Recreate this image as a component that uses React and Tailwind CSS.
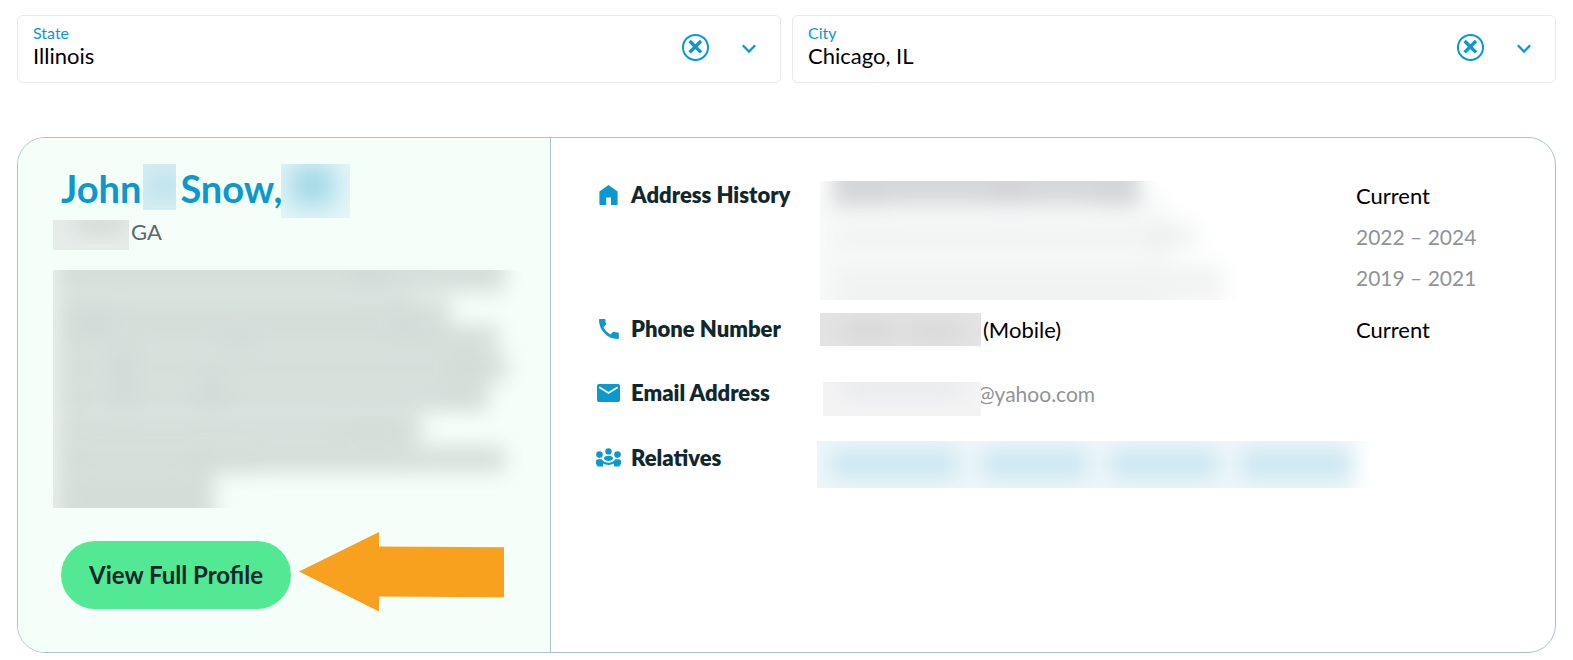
import { useState } from 'react';

const states = ['Illinois', 'Georgia', 'New York'];
const cities = ['Chicago, IL', 'Springfield, IL', 'Naperville, IL'];

// Each patch is [x, y, width, height, opacity]
const bioPatches = [
  [6, -30, 446, 52, 0.84],
  [6, 28, 392, 26, 0.8],
  [6, 55, 440, 26, 0.8],
  [6, 85, 449, 26, 0.8],
  [6, 115, 430, 26, 0.8],
  [6, 146, 364, 26, 0.8],
  [6, 176, 446, 26, 0.85],
  [6, 204, 156, 70, 0.86],
  [-30, -20, 50, 290, 0.35],
  [10, 14, 350, 180, 0.4],
  [360, 60, 70, 70, 0.4],
  [10, 180, 140, 80, 0.3],
  [300, -8, 34, 28, 0.6],
  [28, 36, 30, 30, 0.6],
  [56, 76, 28, 64, 0.5],
  [166, 60, 36, 22, 0.55],
  [142, 104, 34, 36, 0.5],
  [340, 36, 44, 40, 0.4],
  [395, 80, 44, 34, 0.4],
  [370, 120, 56, 18, 0.5],
  [290, 152, 56, 20, 0.4],
  [140, 180, 66, 24, 0.4],
];

const addressPatches = [
  [12, -30, 308, 54, 0.85],
  [16, -4, 50, 30, 0.45],
  [170, -4, 36, 28, 0.6],
  [275, -4, 44, 30, 0.5],
  [-20, 14, 370, 150, 0.14],
  [14, 44, 364, 24, 0.2],
  [14, 84, 388, 50, 0.18],
  [330, 40, 46, 30, 0.14],
  [350, 84, 56, 28, 0.14],
];

const relativePatches = [
  [-20, -30, 560, 110, 0.36],
  [14, 8, 126, 30, 0.9],
  [166, 8, 104, 30, 0.9],
  [294, 8, 106, 30, 0.9],
  [424, 8, 110, 30, 0.9],
];

function Redacted({ id, width, height, color, base = 'none', blur = 10, patches, className = '' }) {
  return (
    <svg
      className={`shrink-0 overflow-hidden ${className}`}
      width={width}
      height={height}
      viewBox={`0 0 ${width} ${height}`}
      aria-hidden="true"
    >
      <filter id={id} x="-50%" y="-50%" width="200%" height="200%">
        <feGaussianBlur stdDeviation={blur} />
      </filter>
      <rect width={width} height={height} fill={base} />
      <g filter={`url(#${id})`} fill={color}>
        {patches.map(([x, y, w, h, opacity], i) => (
          <rect key={i} x={x} y={y} width={w} height={h} opacity={opacity} />
        ))}
      </g>
    </svg>
  );
}

function LocationField({ id, label, options }) {
  const [value, setValue] = useState(options[0]);

  return (
    <div className="relative flex-1 h-[68px] rounded-md border border-[#e8eaea] bg-white">
      <label htmlFor={id} className="absolute left-[15px] top-[7px] text-base leading-5 text-[#0b98cc]">
        {label}
      </label>
      <select
        id={id}
        value={value}
        onChange={(e) => setValue(e.target.value)}
        className="w-full h-full appearance-none rounded-md bg-transparent pl-[15px] pr-28 pt-3 text-[22px] text-black"
      >
        <option value=""></option>
        {options.map((option) => (
          <option key={option} value={option}>{option}</option>
        ))}
      </select>
      <button
        type="button"
        aria-label={`Clear ${label}`}
        onClick={() => setValue('')}
        className="absolute right-[70px] top-[17px] text-[#0b98cc]"
      >
        <svg width="28" height="28" viewBox="0 0 28 28" fill="none" stroke="currentColor">
          <circle cx="13.5" cy="14.4" r="12.5" strokeWidth="2" />
          <path d="M7.600 8l11.400 11.400M19 8L7.600 19.400" strokeWidth="3.400" />
        </svg>
      </button>
      <svg
        className="pointer-events-none absolute right-6 top-[28px] text-[#0b98cc]"
        width="14"
        height="10"
        viewBox="0 0 14 10"
        fill="none"
        stroke="currentColor"
        strokeWidth="2.3"
      >
        <path d="M0.8 1.2L7 7.6l6.2-6.4" />
      </svg>
    </div>
  );
}

function HomeIcon() {
  return (
    <svg width="26" height="26" viewBox="0 0 26 26" fill="currentColor">
      <path d="M13.5 3L22.6 9.6V22a1 1 0 0 1-1 1H16v-7.6h-4.8V23H5.4a1 1 0 0 1-1-1V9.6z" />
    </svg>
  );
}

function PhoneIcon() {
  return (
    <svg width="26" height="26" viewBox="0 0 26 26" fill="currentColor">
      <path d="M5 3h4.4c.6 0 1 .4 1 1 0 1.3.2 2.5.6 3.7.1.4 0 .9-.3 1.2L8.4 11.2c1.7 3.2 4 5.5 7.2 7.2l2.3-2.3c.3-.3.8-.4 1.2-.3 1.2.4 2.4.6 3.7.6.6 0 1 .4 1 1V21.9c0 .6-.4 1-1 1C12.5 23 4 14.5 4 4c0-.6.4-1 1-1z" />
    </svg>
  );
}

function MailIcon() {
  return (
    <svg width="26" height="26" viewBox="0 0 26 26">
      <rect x="2" y="4" width="23" height="18" rx="2" fill="currentColor" />
      <path d="M4.3 7.2L13.5 13l9.2-5.8" fill="none" stroke="white" strokeWidth="1.9" />
    </svg>
  );
}

function RelativesIcon() {
  return (
    <svg width="26" height="26" viewBox="0 0 26 26" fill="currentColor">
      <circle cx="13.5" cy="6.4" r="3.2" />
      <circle cx="4.5" cy="9.6" r="3.3" />
      <circle cx="22.5" cy="9.6" r="3.3" />
      <path d="M8.6 13.3c1-1.7 2.8-2.5 4.9-2.5s3.900.8 4.900 2.500c-1 1.800-2.900 2.700-4.900 2.700s-3.900-.9-4.900-2.700z" />
      <path d="M1 16.5c0-1.300 1-2.200 2.200-2.200h3.600c1.300 2.200 3.600 3.400 6.700 3.400s5.400-1.200 6.700-3.400h3.600c1.200 0 2.200.9 2.200 2.200v2.300l-1.600 2.700h-5.400v-2.900c-1.700.9-3.600 1.300-5.500 1.300s-3.800-.4-5.500-1.300v2.900H2.600L1 18.800z" />
    </svg>
  );
}

function DetailRow({ icon, label, dates, className = '', children }) {
  return (
    <div className={`flex items-start min-h-[41px] ${className}`}>
      <dt className="flex w-[225px] shrink-0 items-center gap-[10px] text-[22px] leading-10 font-extrabold text-[#10272c]">
        <span className="text-[#0b98cc]">{icon}</span>
        {label}
      </dt>
      <dd className="flex min-w-0 flex-1 items-start text-[22px] leading-[41px] text-black">{children}</dd>
      {dates && (
        <dd className="w-[199px] shrink-0 text-[21px] leading-[41px] text-[#8f9498]">
          {dates.map((date) => (
            <p key={date} className={date === 'Current' ? 'text-[22px] leading-[41px] text-black' : ''}>{date}</p>
          ))}
        </dd>
      )}
    </div>
  );
}

function ProfileSummary() {
  return (
    <section className="w-[533px] shrink-0 border-r border-[#a9c5c8] bg-[#f5fff9] pl-[35px] pt-[26px] pb-[43px]">
      <h2 className="flex h-14 items-start pl-2 text-[38px] leading-[48px] font-bold text-[#0b98cc]">
        John
        <Redacted
          id="blur-middle"
          className="ml-[2px]"
          width={33}
          height={46}
          base="#d3edf2"
          color="#b5dfea"
          patches={[[4, 12, 34, 20, 0.8]]}
        />
        <span className="pl-1">Snow,</span>
        <Redacted
          id="blur-age"
          className="-ml-px"
          width={69}
          height={54}
          base="#e6f6f7"
          color="#a0d9e7"
          blur={13}
          patches={[[8, 0, 46, 42, 1]]}
        />
      </h2>
      <div className="flex items-start gap-[2px] text-[22px] leading-6 text-[#5b6769]">
        <Redacted
          id="blur-town"
          width={76}
          height={30}
          base="#e6ece9"
          color="#cdd6d2"
          patches={[[22, -6, 50, 20, 0.8]]}
        />
        GA
      </div>
      <Redacted id="blur-bio" className="mt-5" width={480} height={238} color="#d0d9d5" patches={bioPatches} />
      <div className="mt-[33px] flex items-start gap-2 pl-2">
        <button
          type="button"
          className="h-[68px] w-[230px] rounded-full bg-[#53e893] text-2xl font-bold text-[#10272c]"
        >
          View Full Profile
        </button>
        <svg className="-my-[9px]" width="206" height="80" viewBox="0 0 206 80" fill="#f7a11f">
          <path d="M0 39.5L80 0v14.5l125 .8v50L80 64.5V79.5z" />
        </svg>
      </div>
    </section>
  );
}

function ProfileDetails() {
  return (
    <dl className="min-w-0 flex-1 pl-11 pt-[37px]">
      <DetailRow icon={<HomeIcon />} label="Address History" dates={['Current', '2022 – 2024', '2019 – 2021']}>
        <Redacted id="blur-address" className="mt-[6px]" width={430} height={119} color="#d0d1d3" patches={addressPatches} />
      </DetailRow>
      <DetailRow icon={<PhoneIcon />} label="Phone Number" dates={['Current']} className="mt-[9px]">
        <Redacted
          id="blur-phone"
          className="mt-1"
          width={161}
          height={33}
          base="#e3e3e3"
          color="#d2d2d2"
          patches={[[22, 8, 54, 18, 0.7], [86, 10, 56, 16, 0.7]]}
        />
        <span className="pl-[2px]">(Mobile)</span>
      </DetailRow>
      <DetailRow icon={<MailIcon />} label="Email Address" className="mt-[23px]">
        <Redacted
          id="blur-email"
          className="relative ml-[3px] mt-[9px]"
          width={158}
          height={34}
          base="#f3f3f4"
          color="#e5e7e9"
          patches={[[20, -4, 120, 20, 0.7]]}
        />
        <span className="-ml-1 text-[21px] text-[#8f9498]">@yahoo.com</span>
      </DetailRow>
      <DetailRow icon={<RelativesIcon />} label="Relatives" className="mt-[22px]">
        <Redacted id="blur-relatives" className="-ml-[3px] mt-[3px]" width={556} height={47} color="#cbe7f1" patches={relativePatches} />
      </DetailRow>
    </dl>
  );
}

function App() {
  return (
    <main className="min-h-screen bg-white px-[17px] pt-[15px] pb-2 font-[Lato,sans-serif]">
      <form className="flex gap-[11px]">
        <LocationField id="state" label="State" options={states} />
        <LocationField id="city" label="City" options={cities} />
      </form>
      <article className="mt-[54px] flex overflow-hidden rounded-[28px] border border-[#a9c5c8]">
        <ProfileSummary />
        <ProfileDetails />
      </article>
    </main>
  );
}

export default App;
